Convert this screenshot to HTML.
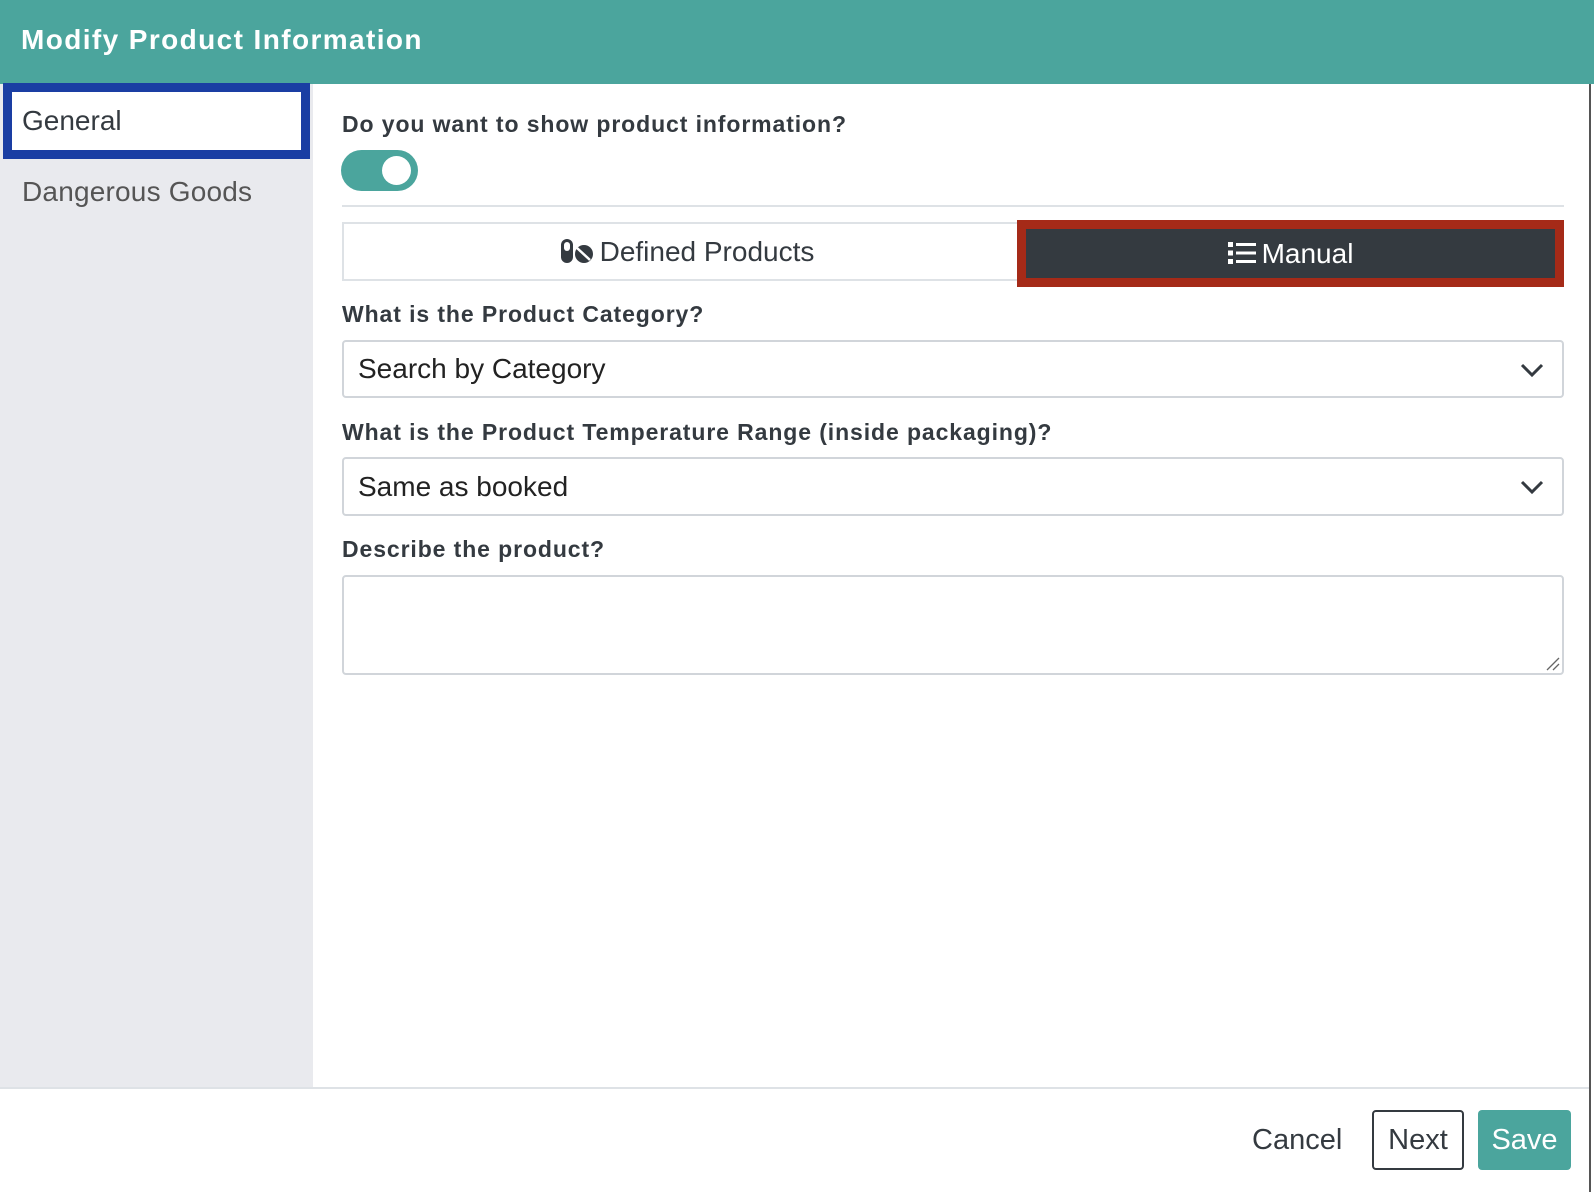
<!DOCTYPE html>
<html><head><meta charset="utf-8"><style>
*{box-sizing:border-box;margin:0;padding:0}
body{width:1594px;height:1192px;background:#fff;font-family:"Liberation Sans",sans-serif;color:#343a40;position:relative;overflow:hidden}
.hdr{position:absolute;left:0;top:0;width:1594px;height:84px;background:#4ba59d;color:#fff;font-weight:bold;font-size:28px;letter-spacing:1.4px;padding:24px 0 0 21px}
.side{position:absolute;left:0;top:84px;width:313px;height:1004px;background:#e9eaee}
.gen{position:absolute;left:3px;top:83px;width:307px;height:76px;border:9px solid #1a3ea3;background:#fff;font-size:28px;color:#343a40;padding:13px 0 0 10px}
.dg{position:absolute;left:22px;top:176px;font-size:28px;color:#555;letter-spacing:0.2px}
.rb{position:absolute;left:1589px;top:84px;width:2px;height:1108px;background:#555}
.lbl{position:absolute;left:342px;font-size:23px;font-weight:bold;color:#343a40;letter-spacing:0.9px}
.tog{position:absolute;left:341px;top:150px;width:77px;height:41px;border-radius:21px;background:#4ba59d}
.tog::after{content:"";position:absolute;right:7px;top:6px;width:29px;height:29px;border-radius:50%;background:#fff}
.hr{position:absolute;left:342px;top:205px;width:1222px;height:2px;background:#dee2e6}
.tab1{position:absolute;left:342px;top:222px;width:690px;height:59px;border:2px solid #dee2e6;font-size:28px;text-align:center;line-height:55px;color:#343a40}
.tab2{position:absolute;left:1017px;top:220px;width:547px;height:67px;border:9px solid #a52a18;background:#343a40;color:#fff;font-size:28px;text-align:center;line-height:49px}
.sel{position:absolute;left:342px;width:1222px;border:2px solid #d1d5da;border-radius:4px;font-size:28px;padding-left:14px;color:#222}
.sel svg{position:absolute;right:18px;top:20px}
</style></head><body>
<div class="hdr">Modify Product Information</div>
<div class="side"></div>
<div class="gen">General</div>
<div class="dg">Dangerous Goods</div>
<div class="rb"></div>
<div class="lbl" style="top:111px">Do you want to show product information?</div>
<div class="tog"></div>
<div class="hr"></div>
<div class="tab1"><svg width="34" height="26" viewBox="0 0 34 26" style="vertical-align:-3px;margin-right:6px"><rect x="1" y="1" width="12" height="24" rx="6" fill="#343a40"/><rect x="4" y="4" width="6" height="9" rx="3" fill="#fff"/><circle cx="24" cy="16" r="9" fill="#343a40"/><line x1="17" y1="10" x2="30" y2="22" stroke="#fff" stroke-width="2.5"/></svg>Defined Products</div>
<div class="tab2"><svg width="28" height="24" viewBox="0 0 28 24" style="vertical-align:-2px;margin-right:6px" fill="#fff"><rect x="0" y="1" width="5" height="5"/><rect x="0" y="9.5" width="5" height="5"/><rect x="0" y="18" width="5" height="5"/><rect x="8" y="2" width="20" height="3"/><rect x="8" y="10.5" width="20" height="3"/><rect x="8" y="19" width="20" height="3"/></svg>Manual</div>
<div class="lbl" style="top:301px">What is the Product Category?</div>
<div class="sel" style="top:340px;height:58px;line-height:54px">Search by Category<svg width="24" height="16" viewBox="0 0 24 16"><path d="M2 3l10 10 10-10" fill="none" stroke="#343a40" stroke-width="3"/></svg></div>
<div class="lbl" style="top:419px">What is the Product Temperature Range (inside packaging)?</div>
<div class="sel" style="top:457px;height:59px;line-height:55px">Same as booked<svg width="24" height="16" viewBox="0 0 24 16"><path d="M2 3l10 10 10-10" fill="none" stroke="#343a40" stroke-width="3"/></svg></div>
<div class="lbl" style="top:536px">Describe the product?</div>
<div class="sel" style="top:575px;height:100px"><svg width="14" height="14" viewBox="0 0 14 14" style="top:auto;bottom:2px;right:2px"><path d="M1 13L13 1M7 13L13 7" stroke="#666" stroke-width="1.3"/></svg></div>
<div style="position:absolute;left:0;top:1087px;width:1589px;height:2px;background:#dee2e6"></div>
<div style="position:absolute;left:1252px;top:1124px;font-size:29px;color:#343a40">Cancel</div>
<div style="position:absolute;left:1372px;top:1110px;width:92px;height:60px;border:2px solid #343a40;border-radius:4px;font-size:29px;text-align:center;line-height:56px">Next</div>
<div style="position:absolute;left:1478px;top:1110px;width:93px;height:60px;background:#4ba59d;border-radius:4px;font-size:29px;color:#fff;text-align:center;line-height:60px">Save</div>
</body></html>
